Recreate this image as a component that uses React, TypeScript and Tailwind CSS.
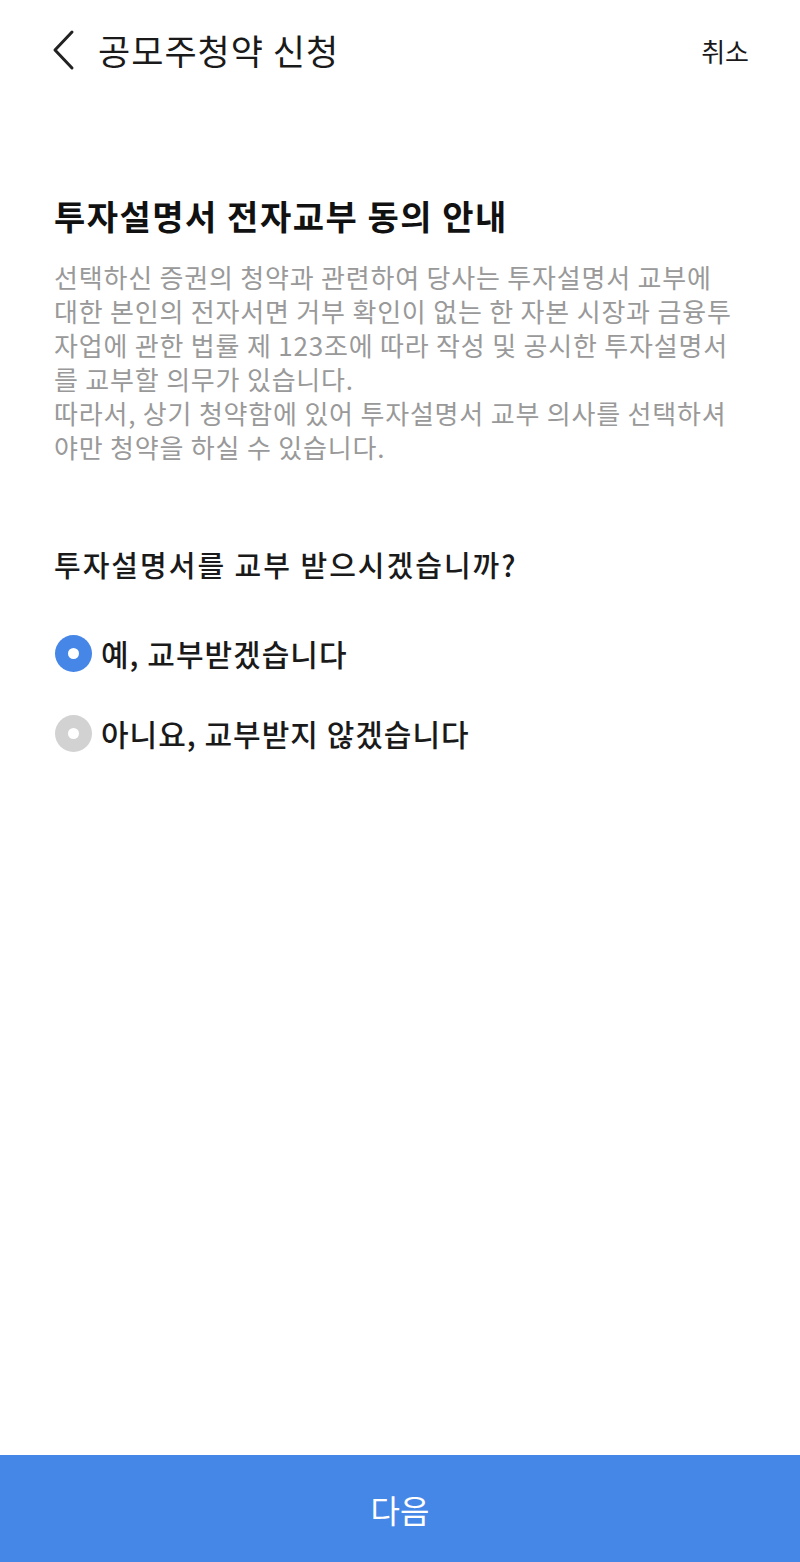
const font = { fontFamily: '"Noto Sans CJK KR", "Noto Sans", sans-serif' }

const bodyLines = [
  '선택하신 증권의 청약과 관련하여 당사는 투자설명서 교부에',
  '대한 본인의 전자서면 거부 확인이 없는 한 자본 시장과 금융투',
  '자업에 관한 법률 제 123조에 따라 작성 및 공시한 투자설명서',
  '를 교부할 의무가 있습니다.',
  '따라서, 상기 청약함에 있어 투자설명서 교부 의사를 선택하셔',
  '야만 청약을 하실 수 있습니다.',
]

function Radio({ checked, label }: { checked: boolean; label: string }) {
  return (
    <div className="flex h-[80px] items-center">
      <span
        className={`ml-[55px] flex h-[37px] w-[37px] items-center justify-center rounded-full ${
          checked ? 'bg-[#4586e6]' : 'bg-[#d2d2d2]'
        }`}
      >
        <span className="h-[11px] w-[11px] rounded-full bg-white" />
      </span>
      <span className="ml-[9px] text-[30px] font-medium tracking-[1px] text-[#1a1a1a]">{label}</span>
    </div>
  )
}

export default function App() {
  return (
    <div className="flex h-[1562px] flex-col bg-white" style={font}>
      <header className="flex h-[100px] items-center">
        <svg className="ml-[50px] h-[42px] w-[26px]" viewBox="0 0 26 42" fill="none">
          <path d="M22 3 L5 21 L22 39" stroke="#222" strokeWidth="3" strokeLinecap="round" strokeLinejoin="round" />
        </svg>
        <h1 className="ml-[22px] text-[35px] font-normal tracking-[1px] text-[#1a1a1a]">공모주청약 신청</h1>
        <span className="ml-auto mr-[51px] text-[26px] text-[#1a1a1a]">취소</span>
      </header>

      <section className="mt-[92px] px-[54px]">
        <h2 className="text-[34px] font-bold leading-[48px] tracking-[1.5px] text-[#111]">
          투자설명서 전자교부 동의 안내
        </h2>
        <div className="mt-[20px] text-[26px] leading-[34px] tracking-[0.8px] text-[#999]">
          {bodyLines.map((l) => (
            <p key={l} className="whitespace-nowrap">
              {l}
            </p>
          ))}
        </div>
      </section>

      <h3 className="mt-[80px] px-[54px] text-[29px] font-medium leading-[40px] tracking-[2px] text-[#1a1a1a]">
        투자설명서를 교부 받으시겠습니까?
      </h3>

      <div className="mt-[29px]">
        <Radio checked label="예, 교부받겠습니다" />
        <Radio checked={false} label="아니요, 교부받지 않겠습니다" />
      </div>

      <button className="mt-auto flex h-[107px] w-full items-center justify-center bg-[#4587e6] text-[32px] text-white">
        다음
      </button>
    </div>
  )
}
